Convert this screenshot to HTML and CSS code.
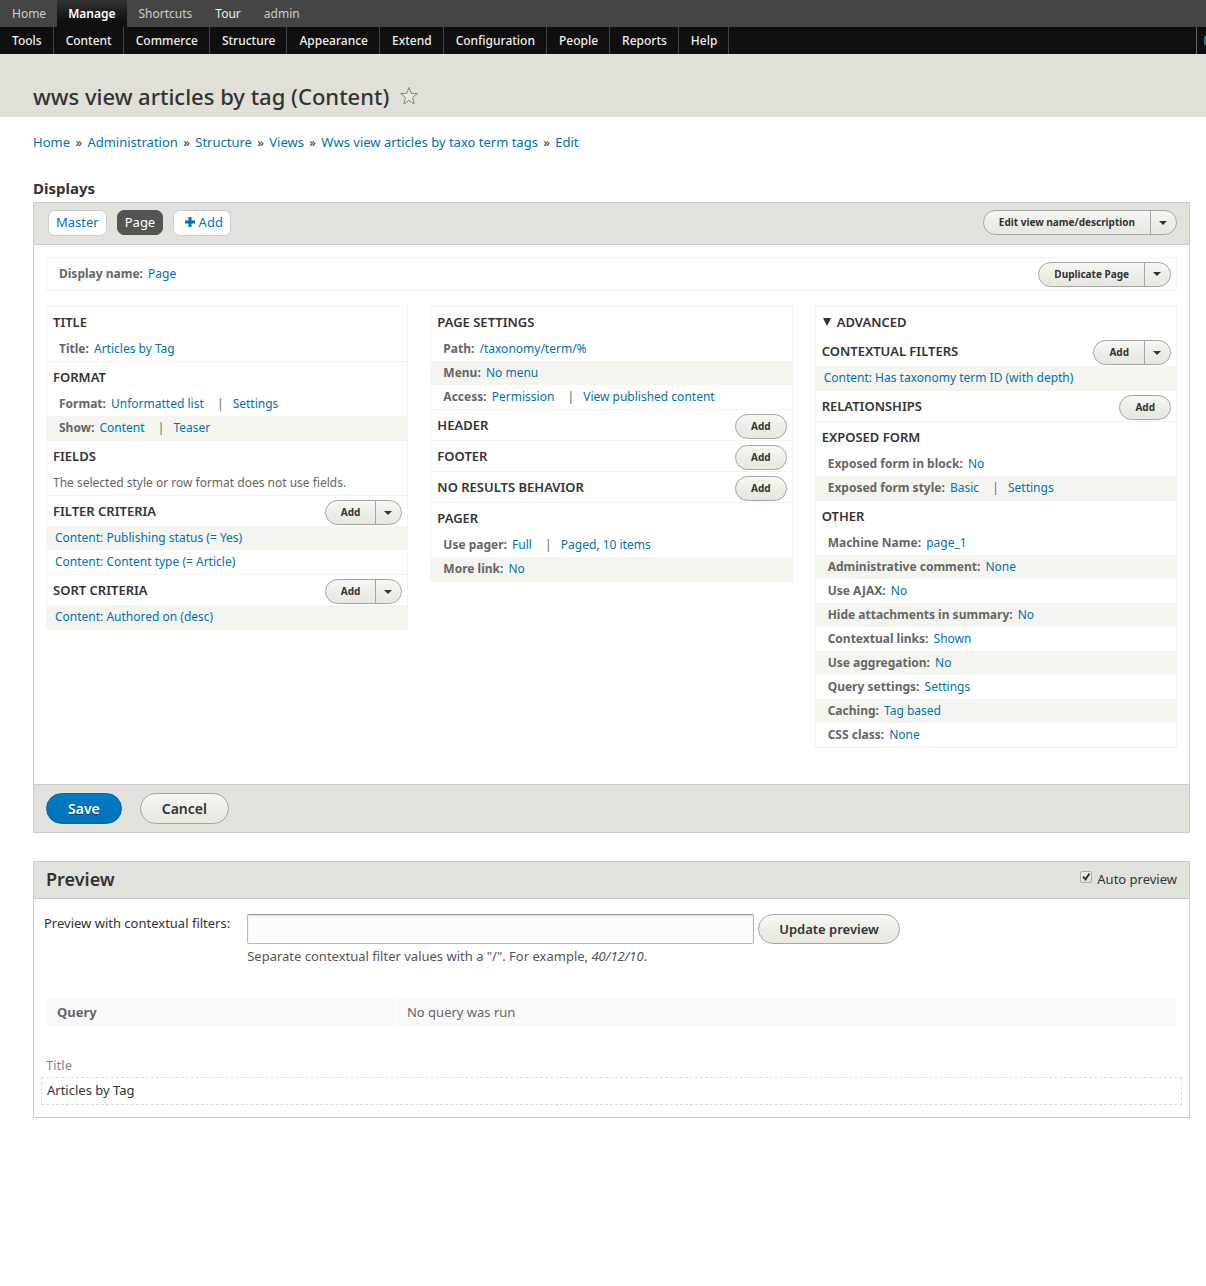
FILE: index.html
```html
<!DOCTYPE html>
<html lang="en" dir="ltr">
<head>
  <meta charset="UTF-8" />
  <meta name="viewport" content="width=device-width, initial-scale=1.0" />
  <title>wws view articles by tag (Content)</title>
  <link rel="stylesheet" href="styles.css">
</head>
<body>
  <nav class="toolbar-bar">
    <a href="#">Home</a>
    <a href="#" class="active">Manage</a>
    <a href="#">Shortcuts</a>
    <a href="#" class="tour">Tour</a>
    <a href="#">admin</a>
  </nav>
  <nav class="toolbar-tray">
    <a href="#">Tools</a>
    <a href="#">Content</a>
    <a href="#">Commerce</a>
    <a href="#">Structure</a>
    <a href="#">Appearance</a>
    <a href="#">Extend</a>
    <a href="#">Configuration</a>
    <a href="#">People</a>
    <a href="#">Reports</a>
    <a href="#">Help</a>
    <button type="button" class="orientation" aria-label="Vertical orientation"></button>
  </nav>

  <header class="page-header">
    <h1>wws view articles by tag (Content)</h1>
    <a href="#" class="star" aria-label="Add to shortcuts">
      <svg width="20" height="20" viewBox="0 0 20 20">
        <path d="M10 1.5 L12.2 7.3 L18.4 7.6 L13.6 11.4 L15.2 17.9 L10 14.4 L4.8 17.9 L6.4 11.4 L1.6 7.6 L7.8 7.3 Z" fill="#e8e8e2" stroke="#87877a" stroke-width="1" stroke-linejoin="round" />
      </svg>
    </a>
  </header>

  <main class="page-content">
    <nav class="breadcrumb">
      <a href="#">Home</a> » <a href="#">Administration</a> » <a href="#">Structure</a> » <a href="#">Views</a> » <a href="#">Wws view articles by taxo term tags</a> » <a href="#">Edit</a>
    </nav>

    <h2 class="displays-title">Displays</h2>
    <form class="panel">
      <div class="display-top">
        <div class="tabs">
          <a href="#" class="tab">Master</a>
          <a href="#" class="tab active">Page</a>
          <a href="#" class="tab add">
            <svg width="10" height="10" viewBox="0 0 10 10"><path d="M3.5 0h3v3.5H10v3H6.5V10h-3V6.5H0v-3h3.5z" fill="#0071b3" /></svg>
            Add
          </a>
        </div>
        <div class="dropbutton">
          <button type="button">Edit view name/description</button>
          <button type="button" class="toggle" aria-label="List additional actions"></button>
        </div>
      </div>

      <div class="display-body">
        <div class="display-name">
          <div><strong>Display name:</strong> <a href="#">Page</a></div>
          <div class="dropbutton">
            <button type="button">Duplicate Page</button>
            <button type="button" class="toggle" aria-label="List additional actions"></button>
          </div>
        </div>

        <div class="columns">
          <div class="column">
            <section class="bucket">
              <div class="bucket-head"><h3>Title</h3></div>
              <div class="setting"><strong>Title:</strong> <a href="#">Articles by Tag</a></div>
            </section>
            <section class="bucket">
              <div class="bucket-head"><h3>Format</h3></div>
              <div class="setting"><strong>Format:</strong> <a href="#">Unformatted list</a> <span class="sep">|</span> <a href="#">Settings</a></div>
              <div class="setting even"><strong>Show:</strong> <a href="#">Content</a> <span class="sep">|</span> <a href="#">Teaser</a></div>
            </section>
            <section class="bucket">
              <div class="bucket-head"><h3>Fields</h3></div>
              <div class="setting note">The selected style or row format does not use fields.</div>
            </section>
            <section class="bucket">
              <div class="bucket-head">
                <h3>Filter criteria</h3>
                <div class="dropbutton">
                  <button type="button">Add</button>
                  <button type="button" class="toggle" aria-label="List additional actions"></button>
                </div>
              </div>
              <div class="setting item even"><a href="#">Content: Publishing status (= Yes)</a></div>
              <div class="setting item"><a href="#">Content: Content type (= Article)</a></div>
            </section>
            <section class="bucket">
              <div class="bucket-head">
                <h3>Sort criteria</h3>
                <div class="dropbutton">
                  <button type="button">Add</button>
                  <button type="button" class="toggle" aria-label="List additional actions"></button>
                </div>
              </div>
              <div class="setting item even"><a href="#">Content: Authored on (desc)</a></div>
            </section>
          </div>

          <div class="column">
            <section class="bucket">
              <div class="bucket-head"><h3>Page settings</h3></div>
              <div class="setting"><strong>Path:</strong> <a href="#">/taxonomy/term/%</a></div>
              <div class="setting even"><strong>Menu:</strong> <a href="#">No menu</a></div>
              <div class="setting"><strong>Access:</strong> <a href="#">Permission</a> <span class="sep">|</span> <a href="#">View published content</a></div>
            </section>
            <section class="bucket">
              <div class="bucket-head">
                <h3>Header</h3>
                <div class="dropbutton"><button type="button">Add</button></div>
              </div>
            </section>
            <section class="bucket">
              <div class="bucket-head">
                <h3>Footer</h3>
                <div class="dropbutton"><button type="button">Add</button></div>
              </div>
            </section>
            <section class="bucket">
              <div class="bucket-head">
                <h3>No results behavior</h3>
                <div class="dropbutton"><button type="button">Add</button></div>
              </div>
            </section>
            <section class="bucket">
              <div class="bucket-head"><h3>Pager</h3></div>
              <div class="setting"><strong>Use pager:</strong> <a href="#">Full</a> <span class="sep">|</span> <a href="#">Paged, 10 items</a></div>
              <div class="setting even"><strong>More link:</strong> <a href="#">No</a></div>
            </section>
          </div>

          <details class="column advanced" open>
            <summary>Advanced</summary>
            <section class="bucket">
              <div class="bucket-head">
                <h3>Contextual filters</h3>
                <div class="dropbutton">
                  <button type="button">Add</button>
                  <button type="button" class="toggle" aria-label="List additional actions"></button>
                </div>
              </div>
              <div class="setting item even"><a href="#">Content: Has taxonomy term ID (with depth)</a></div>
            </section>
            <section class="bucket">
              <div class="bucket-head">
                <h3>Relationships</h3>
                <div class="dropbutton"><button type="button">Add</button></div>
              </div>
            </section>
            <section class="bucket">
              <div class="bucket-head"><h3>Exposed form</h3></div>
              <div class="setting"><strong>Exposed form in block:</strong> <a href="#">No</a></div>
              <div class="setting even"><strong>Exposed form style:</strong> <a href="#">Basic</a> <span class="sep">|</span> <a href="#">Settings</a></div>
            </section>
            <section class="bucket">
              <div class="bucket-head"><h3>Other</h3></div>
              <div class="setting"><strong>Machine Name:</strong> <a href="#">page_1</a></div>
              <div class="setting even"><strong>Administrative comment:</strong> <a href="#">None</a></div>
              <div class="setting"><strong>Use AJAX:</strong> <a href="#">No</a></div>
              <div class="setting even"><strong>Hide attachments in summary:</strong> <a href="#">No</a></div>
              <div class="setting"><strong>Contextual links:</strong> <a href="#">Shown</a></div>
              <div class="setting even"><strong>Use aggregation:</strong> <a href="#">No</a></div>
              <div class="setting"><strong>Query settings:</strong> <a href="#">Settings</a></div>
              <div class="setting even"><strong>Caching:</strong> <a href="#">Tag based</a></div>
              <div class="setting"><strong>CSS class:</strong> <a href="#">None</a></div>
            </section>
          </details>
        </div>
      </div>

      <div class="actions">
        <button type="submit" class="button primary">Save</button>
        <button type="button" class="button">Cancel</button>
      </div>
    </form>

    <form class="panel preview">
      <div class="preview-head">
        <h2>Preview</h2>
        <div class="auto-preview">
          <input type="checkbox" id="auto-preview" checked>
          <label for="auto-preview">Auto preview</label>
        </div>
      </div>
      <div class="preview-controls">
        <label for="preview-args">Preview with contextual filters:</label>
        <div class="field">
          <input type="text" id="preview-args">
          <p>Separate contextual filter values with a "/". For example, <em>40/12/10</em>.</p>
        </div>
        <button type="submit" class="button">Update preview</button>
      </div>
      <table class="query-info">
        <tr>
          <th scope="row">Query</th>
          <td>No query was run</td>
        </tr>
      </table>
      <div class="live-preview">
        <h4>Title</h4>
        <div class="preview-title">Articles by Tag</div>
      </div>
    </form>
  </main>
</body>
</html>
```
FILE: styles.css
```css
* {
  box-sizing: border-box;
}

body {
  margin: 0;
  background: #fff;
  color: #333;
  font-family: "Noto Sans", "Open Sans", sans-serif;
  font-size: 13px;
  line-height: 20px;
}

a {
  color: #0071b3;
  text-decoration: none;
}

h1, h2, h3, h4, p {
  margin: 0;
}

button, input {
  font-family: inherit;
}

/* Toolbar */
.toolbar-bar,
.toolbar-tray {
  display: flex;
  height: 27px;
  overflow: hidden;
  font-size: 12px;
  line-height: 27px;
}

.toolbar-bar {
  background: #444;
}

.toolbar-bar a {
  padding: 0 11px 0 12px;
  color: #ccc;
}

.toolbar-bar .tour {
  color: #eee;
}

.toolbar-bar .active {
  padding: 0 11px;
  background: linear-gradient(#333, #0f0f0f 80%);
  color: #fff;
  font-weight: 600;
}

.toolbar-tray {
  background: #0f0f0f;
}

.toolbar-tray a {
  padding: 0 11px 0 12px;
  border-right: 1px solid #444;
  color: #eee;
  font-weight: 500;
}

.orientation {
  width: 10px;
  margin-left: auto;
  padding: 9px 0 9px 7px;
  border: 0;
  border-left: 1px solid #666;
  background: linear-gradient(#2a6d9c, #2a6d9c) no-repeat content-box #0f0f0f;
}

/* Page header */
.page-header {
  display: flex;
  align-items: center;
  gap: 10px;
  height: 63px;
  padding: 21px 33px 0;
  background: #e0e0d8;
}

.page-header h1 {
  font-size: 22px;
  font-weight: 500;
  line-height: 40px;
}

.star {
  display: flex;
}

.page-content {
  padding: 15px 16px 0 33px;
}

.breadcrumb {
  margin-bottom: 26px;
}

.breadcrumb a {
  margin: 0 2px;
}

.breadcrumb a:first-child {
  margin-left: 0;
}

.displays-title {
  margin-bottom: 3px;
  font-size: 15px;
  font-weight: bold;
  line-height: 21px;
}

.panel {
  border: 1px solid #ccc;
}

/* Display tabs */
.display-top {
  display: flex;
  align-items: center;
  justify-content: space-between;
  height: 42px;
  padding: 0 12px 2px 14px;
  border-bottom: 1px solid #ccc;
  background: #e1e2dc;
}

.tabs {
  display: flex;
  gap: 10px;
}

.tab {
  height: 26px;
  padding: 0 7px;
  border: 1px solid #ccc;
  border-radius: 7px;
  background: #fff;
  line-height: 23px;
}

.tab.active {
  height: 25px;
  border-color: #555;
  background: #555;
  color: #fff;
  line-height: 22px;
}

.tab.add {
  padding-left: 11px;
}

/* Buttons */
.dropbutton {
  display: flex;
  height: 25px;
  overflow: hidden;
  border: 1px solid #a6a6a6;
  border-radius: 13px;
  background: linear-gradient(#f6f6f3, #e7e7df);
}

.dropbutton button {
  padding: 0 15px;
  border: 0;
  background: none;
  color: #333;
  font-size: 10px;
  font-weight: bold;
  line-height: 23px;
}

.dropbutton .toggle {
  display: flex;
  align-items: center;
  justify-content: center;
  width: 26px;
  padding: 0 2px 0 0;
  border-left: 1px solid #a6a6a6;
}

.toggle::after {
  content: "";
  border: 4px solid transparent;
  border-top-color: #333;
  border-bottom: 0;
}

.button {
  height: 30px;
  padding: 0 20px;
  border: 1px solid #a6a6a6;
  border-radius: 15px;
  background: linear-gradient(#f6f6f3, #e7e7df);
  color: #333;
  font-size: 13px;
  font-weight: 600;
  line-height: 26px;
}

.button.primary {
  border-color: #1e5c90;
  background: linear-gradient(#007bc6, #0071b8);
  color: #fff;
  text-shadow: 0 1px rgba(0, 0, 0, 0.5);
}

/* Display settings */
.display-body {
  padding: 12px 12px 36px;
}

.display-name {
  display: flex;
  align-items: center;
  justify-content: space-between;
  height: 34px;
  margin-bottom: 15px;
  padding: 0 5px 0 12px;
  border: 1px solid #f3f3f3;
  color: #666;
  font-size: 12px;
}

.columns {
  display: grid;
  grid-template-columns: repeat(3, 1fr);
  gap: 22px;
  align-items: start;
}

.column {
  border: 1px solid #f3f3f3;
  border-top: 0;
  color: #666;
  font-size: 12px;
}

.bucket {
  border-top: 1px solid #f3f3f3;
}

.bucket-head {
  display: flex;
  justify-content: space-between;
  height: 30px;
  padding: 4px 5px 0 6px;
}

.bucket-head h3,
.advanced summary {
  color: #333;
  font-size: 13px;
  font-weight: 600;
  line-height: 22px;
  text-transform: uppercase;
}

.setting {
  min-height: 24px;
  padding: 0 12px;
  line-height: 24px;
}

.setting strong,
.display-name strong {
  margin-right: 2px;
  font-weight: bold;
}

.setting.even {
  background: #f4f5ef;
}

.setting.item {
  padding-left: 8px;
}

.setting.note {
  padding-left: 6px;
}

.sep {
  margin: 0 6px 0 10px;
}

.advanced {
  border-top: 1px solid #f3f3f3;
}

.advanced summary {
  display: flex;
  align-items: center;
  gap: 6px;
  height: 29px;
  padding-left: 7px;
}

.advanced summary::before {
  content: "";
  border: 4px solid transparent;
  border-top: 8px solid #333;
  border-bottom: 0;
}

.advanced summary + .bucket {
  border-top: 0;
}

.actions {
  display: flex;
  gap: 18px;
  padding: 8px 12px;
  border-top: 1px solid #ccc;
  background: #e1e2dc;
}

.actions .button {
  height: 31px;
  padding: 0 21px;
  border-radius: 16px;
  font-size: 14px;
}

/* Preview */
.preview {
  margin-top: 28px;
}

.preview-head {
  display: flex;
  align-items: center;
  justify-content: space-between;
  height: 37px;
  padding: 0 12px 2px;
  border-bottom: 1px solid #ccc;
  background: #e1e2dc;
}

.preview-head h2 {
  font-size: 18px;
  font-weight: 600;
}

.auto-preview {
  display: flex;
  gap: 5px;
}

.auto-preview input {
  display: flex;
  align-items: center;
  justify-content: center;
  width: 12px;
  height: 12px;
  margin: 2px 0 0;
  border: 1px solid #aaa;
  border-radius: 2px;
  background: linear-gradient(#f0f0f0, #ddd);
  appearance: none;
}

.auto-preview input:checked::after {
  content: "";
  width: 8px;
  height: 8px;
  background: #333;
  clip-path: polygon(0 50%, 18% 38%, 38% 60%, 80% 0, 100% 14%, 42% 100%);
}

.preview-controls {
  display: flex;
  align-items: flex-start;
  padding: 15px 10px 0;
}

.preview-controls label {
  margin-right: 17px;
  line-height: 18px;
}

.field {
  flex: 0 1 507px;
  margin-right: 4px;
}

.field input {
  display: block;
  width: 100%;
  height: 30px;
  border: 1px solid #b8b8b8;
  border-top-color: #999;
  border-radius: 2px;
  background: #fcfcfa;
  box-shadow: inset 0 1px 2px rgba(0, 0, 0, 0.12);
}

.field p {
  margin-top: 2px;
  color: #555;
}

.query-info {
  width: calc(100% - 26px);
  margin: 33px 13px 0;
  border-spacing: 0;
  color: #666;
}

.query-info th,
.query-info td {
  padding: 3px 10px 5px;
  background: #f9f9f9;
  line-height: 20px;
  text-align: left;
}

.query-info th {
  width: 31%;
  border-right: 1px solid #fff;
}

.live-preview {
  padding: 28px 7px 12px;
}

.live-preview h4 {
  margin-bottom: 2px;
  padding-left: 5px;
  color: #888;
  font-weight: normal;
}

.preview-title {
  padding: 2px 5px 4px;
  border: 1px dashed #ddd;
}
```
